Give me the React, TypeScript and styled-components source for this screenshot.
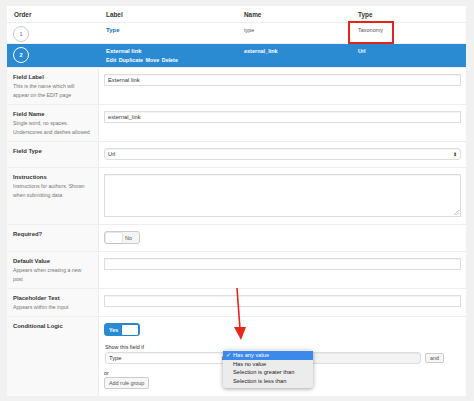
import React from 'react';
import styled, { createGlobalStyle, css } from 'styled-components';

const GlobalStyle = createGlobalStyle`
  html, body {
    margin: 0;
    padding: 0;
    background: #f1f1f1;
    font-family: "Liberation Sans", Arial, sans-serif;
    color: #333;
    overflow: hidden;
  }
`;

const blue = '#2a8bd2';

const Page = styled.div`
  position: relative;
  width: 474px;
  height: 401px;
  padding: 6px 8px 0 7px;
  box-sizing: border-box;
`;

const Panel = styled.div`
  position: relative;
  background: #fff;
  width: 459px;
`;

const cols = css`
  display: grid;
  grid-template-columns: 92px 138px 114px 1fr;
`;

const HeaderRow = styled.div`
  ${cols};
  height: 16px;
  align-items: center;
  border-bottom: 1px solid #eee;
  font-size: 6.4px;
  font-weight: bold;
  color: #333;
  & > div {
    padding-left: 7px;
  }
`;

const FieldRow = styled.div<{ $active?: boolean }>`
  ${cols};
  height: ${(p) => (p.$active ? 23 : 21)}px;
  box-sizing: border-box;
  background: ${(p) => (p.$active ? blue : '#fff')};
  color: ${(p) => (p.$active ? '#fff' : '#555')};
  font-size: 5.5px;
  border-bottom: ${(p) => (p.$active ? 'none' : '1px solid #f2f2f2')};
`;

const Cell = styled.div<{ $bold?: boolean }>`
  padding: 3px 7px 0;
  line-height: 9px;
  font-weight: ${(p) => (p.$bold ? 'bold' : 'normal')};
`;

const OrderCell = styled.div`
  padding: 2px 0 0 6px;
  display: flex;
`;

const OrderCircle = styled.span<{ $active?: boolean }>`
  width: 14px;
  height: 14px;
  margin-top: 1px;
  border-radius: 50%;
  border: 1px solid ${(p) => (p.$active ? '#fff' : '#ccc')};
  display: flex;
  align-items: center;
  justify-content: center;
  font-size: 5.5px;
  font-weight: ${(p) => (p.$active ? 'bold' : 'normal')};
  color: ${(p) => (p.$active ? '#fff' : '#666')};
  background: ${(p) => (p.$active ? 'transparent' : '#fff')};
`;

const FieldTitle = styled.div<{ $active?: boolean }>`
  font-size: 6px;
  font-weight: bold;
  color: ${(p) => (p.$active ? '#fff' : '#2271b1')};
`;

const RowActions = styled.div`
  display: flex;
  gap: 2.5px;
  font-size: 5.4px;
  font-weight: bold;
  color: #fff;
  line-height: 8px;
`;

const TypeCell = styled(Cell)`
  position: relative;
`;

const Highlight = styled.div`
  position: absolute;
  left: -3px;
  top: -2px;
  width: 42px;
  height: 19px;
  border: 2px solid #e5221b;
`;

const SettingRow = styled.div`
  display: grid;
  grid-template-columns: 92px 1fr;
  border-top: 1px solid #eeeeee;
`;

const LabelCell = styled.div`
  background: #f9f9f9;
  border-right: 1px solid #eeeeee;
  padding: 5px 1px 4px 6px;
  line-height: 9px;
  white-space: nowrap;
`;

const LabelTitle = styled.div`
  font-size: 5.9px;
  font-weight: bold;
  color: #333;
`;

const LabelDesc = styled.div`
  font-size: 5.2px;
  color: #777;
`;

const InputCell = styled.div<{ $top?: number }>`
  padding: ${(p) => p.$top ?? 6}px 5px 7px;
`;

const TextInput = styled.div`
  height: 12px;
  box-sizing: border-box;
  border: 1px solid #dddddd;
  box-shadow: inset 0 1px 1px rgba(0, 0, 0, 0.05);
  font-size: 5.8px;
  color: #333;
  padding: 0 3px;
  display: flex;
  align-items: center;
  background: #fff;
`;

const SelectBox = styled(TextInput)<{ $w?: number; $grey?: boolean }>`
  justify-content: space-between;
  border-radius: 3px;
  width: ${(p) => (p.$w ? `${p.$w}px` : 'auto')};
  background: ${(p) => (p.$grey ? '#f3f3f3' : '#fff')};
  flex: ${(p) => (p.$w ? 'none' : '1')};
  margin-left: ${(p) => (p.$grey ? '-3px' : '0')};
`;

const Arrows = styled.span`
  font-size: 5px;
  line-height: 1;
  color: #333;
`;

const TextArea = styled.div`
  position: relative;
  height: 43px;
  box-sizing: border-box;
  border: 1px solid #dddddd;
  box-shadow: inset 0 1px 1px rgba(0, 0, 0, 0.05);
`;

const ResizeGrip = styled.svg`
  position: absolute;
  right: 1px;
  bottom: 1px;
`;

const Toggle = styled.div<{ $on?: boolean }>`
  width: 36px;
  height: 13px;
  box-sizing: border-box;
  border-radius: 3px;
  border: 1px solid ${(p) => (p.$on ? blue : '#cccccc')};
  background: ${(p) => (p.$on ? blue : '#f5f5f5')};
  display: flex;
  flex-direction: ${(p) => (p.$on ? 'row' : 'row-reverse')};
  align-items: center;
  padding: 1px;
  gap: 2px;
`;

const ToggleText = styled.span<{ $on?: boolean }>`
  flex: 1;
  font-size: 5.4px;
  font-weight: ${(p) => (p.$on ? 'bold' : 'normal')};
  color: ${(p) => (p.$on ? '#fff' : '#555')};
  padding-left: ${(p) => (p.$on ? 3 : 1)}px;
`;

const ToggleKnob = styled.span`
  width: 16px;
  height: 10px;
  background: #fff;
  border-radius: 1px;
  box-shadow: 0 0 0 1px rgba(0, 0, 0, 0.06);
`;

const SubLabel = styled.div`
  font-size: 5.4px;
  color: #333;
  margin: 8px 0 2px 1px;
`;

const RuleRow = styled.div`
  position: relative;
  display: flex;
  gap: 4px;
  align-items: center;
  padding-left: 1px;
`;

const SmallButton = styled.div<{ $h?: number }>`
  border: 1px solid #cccccc;
  border-radius: 2px;
  background: #f7f7f7;
  font-size: 5.4px;
  color: #555;
  padding: 0 4px;
  height: ${(p) => p.$h ?? 12}px;
  display: flex;
  align-items: center;
  box-sizing: border-box;
  width: fit-content;
`;

const OrText = styled.div`
  font-size: 5.4px;
  color: #333;
  margin: 6px 0 1px;
`;

const Popup = styled.div`
  position: absolute;
  left: 119px;
  top: -2px;
  width: 90px;
  padding: 1px 0 3px;
  background: #ececec;
  border-radius: 3px;
  box-shadow: 0 1px 4px rgba(0, 0, 0, 0.35);
  z-index: 2;
`;

const PopupItem = styled.div<{ $selected?: boolean }>`
  display: flex;
  height: 8.6px;
  align-items: center;
  font-size: 5.7px;
  color: ${(p) => (p.$selected ? '#fff' : '#222')};
  background: ${(p) => (p.$selected ? '#3b89e8' : 'transparent')};
`;

const Check = styled.span`
  width: 10px;
  text-align: center;
  font-size: 5.5px;
`;

const Arrow = styled.svg`
  position: absolute;
  left: 228px;
  top: 285px;
  pointer-events: none;
`;

const textSettings = [
  { title: 'Field Label', desc: ['This is the name which will', 'appear on the EDIT page'], value: 'External link' },
  { title: 'Field Name', desc: ['Single word, no spaces.', 'Underscores and dashes allowed'], value: 'external_link' },
];

const conditions = ['Has any value', 'Has no value', 'Selection is greater than', 'Selection is less than'];

const UpDown = () => <Arrows>⬍</Arrows>;

const Label: React.FC<{ title: string; desc?: string[] }> = ({ title, desc = [] }) => (
  <LabelCell>
    <LabelTitle>{title}</LabelTitle>
    {desc.map((d) => (
      <LabelDesc key={d}>{d}</LabelDesc>
    ))}
  </LabelCell>
);

const App: React.FC = () => {
  return (
    <>
      <GlobalStyle />
      <Page>
        <Panel>
          <HeaderRow>
            <div>Order</div>
            <div>Label</div>
            <div>Name</div>
            <div>Type</div>
          </HeaderRow>

          <FieldRow>
            <OrderCell>
              <OrderCircle>1</OrderCircle>
            </OrderCell>
            <Cell>
              <FieldTitle>Type</FieldTitle>
            </Cell>
            <Cell>type</Cell>
            <TypeCell>
              Taxonomy
              <Highlight />
            </TypeCell>
          </FieldRow>

          <FieldRow $active>
            <OrderCell>
              <OrderCircle $active>2</OrderCircle>
            </OrderCell>
            <Cell>
              <FieldTitle $active>External link</FieldTitle>
              <RowActions>
                <span>Edit</span>
                <span>Duplicate</span>
                <span>Move</span>
                <span>Delete</span>
              </RowActions>
            </Cell>
            <Cell $bold>external_link</Cell>
            <Cell $bold>Url</Cell>
          </FieldRow>

          {textSettings.map((s) => (
            <SettingRow key={s.title}>
              <Label title={s.title} desc={s.desc} />
              <InputCell>
                <TextInput>{s.value}</TextInput>
              </InputCell>
            </SettingRow>
          ))}

          <SettingRow>
            <Label title="Field Type" />
            <InputCell>
              <SelectBox>
                Url
                <UpDown />
              </SelectBox>
            </InputCell>
          </SettingRow>

          <SettingRow>
            <Label title="Instructions" desc={['Instructions for authors. Shown', 'when submitting data']} />
            <InputCell>
              <TextArea>
                <ResizeGrip width="5" height="5" viewBox="0 0 5 5">
                  <path d="M5 0 L0 5 M5 2.5 L2.5 5" stroke="#999" strokeWidth="0.6" />
                </ResizeGrip>
              </TextArea>
            </InputCell>
          </SettingRow>

          <SettingRow>
            <Label title="Required?" />
            <InputCell>
              <Toggle>
                <ToggleText>No</ToggleText>
                <ToggleKnob />
              </Toggle>
            </InputCell>
          </SettingRow>

          <SettingRow>
            <Label title="Default Value" desc={['Appears when creating a new', 'post']} />
            <InputCell>
              <TextInput />
            </InputCell>
          </SettingRow>

          <SettingRow>
            <Label title="Placeholder Text" desc={['Appears within the input']} />
            <InputCell>
              <TextInput />
            </InputCell>
          </SettingRow>

          <SettingRow>
            <Label title="Conditional Logic" />
            <InputCell $top={6}>
              <Toggle $on>
                <ToggleText $on>Yes</ToggleText>
                <ToggleKnob />
              </Toggle>
              <SubLabel>Show this field if</SubLabel>
              <RuleRow>
                <SelectBox $w={124}>
                  Type
                  <UpDown />
                </SelectBox>
                <SelectBox $grey $w={191} />
                <SmallButton $h={10}>and</SmallButton>
                <Popup>
                  {conditions.map((c, i) => (
                    <PopupItem key={c} $selected={i === 0}>
                      <Check>{i === 0 ? '✓' : ''}</Check>
                      {c}
                    </PopupItem>
                  ))}
                </Popup>
              </RuleRow>
              <OrText>or</OrText>
              <SmallButton>Add rule group</SmallButton>
            </InputCell>
          </SettingRow>
        </Panel>

        <Arrow width="20" height="58" viewBox="0 0 20 58">
          <line x1="9" y1="3" x2="12" y2="44" stroke="#e8261d" strokeWidth="1.6" />
          <polygon points="6,42 18,42 13,55" fill="#e8261d" />
        </Arrow>
      </Page>
    </>
  );
};

export default App;
